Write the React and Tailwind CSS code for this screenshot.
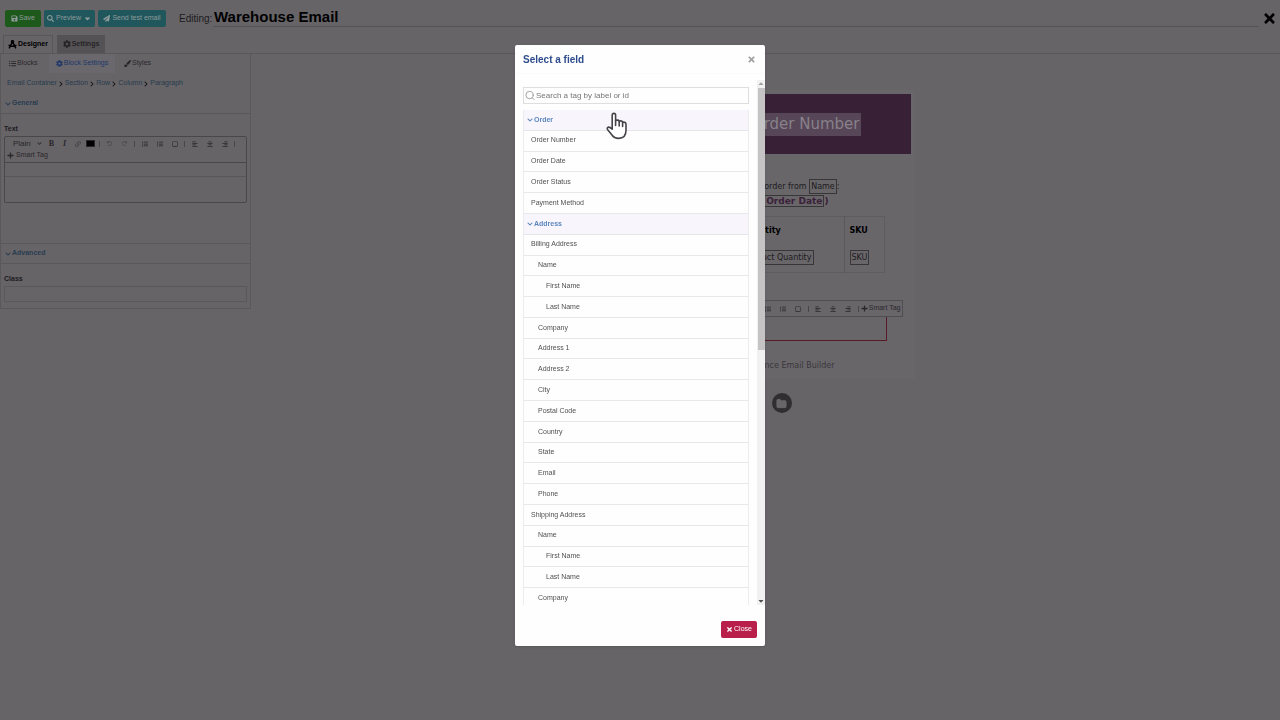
import React from "react";
import {
  FaSave,
  FaSearch,
  FaCaretDown,
  FaPaperPlane,
  FaCog,
  FaListUl,
  FaListOl,
  FaPaintBrush,
  FaPlus,
  FaTimes,
  FaLink,
  FaUndo,
  FaRedo,
  FaAlignLeft,
  FaAlignCenter,
  FaAlignRight,
  FaRegSquare,
  FaChevronDown,
  FaChevronRight,
} from "react-icons/fa";
import { FiSearch, FiFolder } from "react-icons/fi";

const crumbs = ["Email Container", "Section", "Row", "Column", "Paragraph"];

const fields = [
  { label: "Order", group: true },
  { label: "Order Number", level: 0 },
  { label: "Order Date", level: 0 },
  { label: "Order Status", level: 0 },
  { label: "Payment Method", level: 0 },
  { label: "Address", group: true },
  { label: "Billing Address", level: 0 },
  { label: "Name", level: 1 },
  { label: "First Name", level: 2 },
  { label: "Last Name", level: 2 },
  { label: "Company", level: 1 },
  { label: "Address 1", level: 1 },
  { label: "Address 2", level: 1 },
  { label: "City", level: 1 },
  { label: "Postal Code", level: 1 },
  { label: "Country", level: 1 },
  { label: "State", level: 1 },
  { label: "Email", level: 1 },
  { label: "Phone", level: 1 },
  { label: "Shipping Address", level: 0 },
  { label: "Name", level: 1 },
  { label: "First Name", level: 2 },
  { label: "Last Name", level: 2 },
  { label: "Company", level: 1 },
];

const indents = ["pl-[7px]", "pl-[14px]", "pl-[22px]"];

const TopBar = () => (
  <header className="flex items-center h-[36px] pl-[5px] pr-[3px]">
    <div className="flex gap-[3px] text-[7px] text-[#8f9a9b]">
      <button className="flex items-center justify-center gap-px w-[36px] h-[17px] rounded-[2px] bg-[#1e591c]">
        <FaSave /> Save
      </button>
      <button className="flex items-center justify-center gap-[2px] w-[51px] h-[17px] rounded-[2px] bg-[#1f575c]">
        <FaSearch /> Preview <FaCaretDown className="text-[9px]" />
      </button>
      <button className="flex items-center justify-center gap-[2px] w-[68px] h-[17px] rounded-[2px] bg-[#1f575c]">
        <FaPaperPlane /> Send test email
      </button>
    </div>
    <label htmlFor="title" className="ml-[13px] w-[34px] text-[10px] text-[#1c1b1d]">
      Editing:
    </label>
    <input
      id="title"
      defaultValue="Warehouse Email"
      className="flex-1 min-w-0 h-[18px] pl-px border-b border-[#555256] text-[15px] font-bold text-black outline-none"
    />
    <button aria-label="Close editor" className="ml-[3px] text-[15px] text-black">
      <FaTimes />
    </button>
  </header>
);

const MainTabs = () => (
  <nav className="flex items-end gap-[4px] h-[18px] pl-[3px] border-b border-[#5a575b] text-[7px] font-bold">
    <button className="flex items-center justify-center gap-px w-[50px] h-[18px] border border-b-0 border-[#5a575b] text-black">
      <svg viewBox="0 0 16 16" className="w-[9px] h-[9px]" fill="none" stroke="currentColor" strokeWidth="2.6">
        <path d="M2 15 8 3l6 12M1 9q7 4 14 0" />
        <circle cx="8" cy="3" r="1.8" fill="currentColor" />
      </svg>
      Designer
    </button>
    <button className="flex items-center justify-center gap-px w-[48px] h-[18px] bg-[#555256] text-[#252427]">
      <FaCog className="text-[8px]" /> Settings
    </button>
  </nav>
);

const SubTabs = () => (
  <nav className="flex h-[19px] text-[7px] text-[#29272a]">
    <button className="flex items-center gap-px w-[48px] pl-[8px]">
      <FaListUl /> Blocks
    </button>
    <button className="flex items-center justify-center gap-px w-[66px] bg-[#6a676d] text-[#20386a]">
      <FaCog /> Block Settings
    </button>
    <button className="flex items-center gap-px pl-[9px]">
      <FaPaintBrush /> Styles
    </button>
  </nav>
);

const SectionTitle = ({ children }) => (
  <h2 className="flex items-center gap-px h-[20px] pl-[4px] border-b border-[#5b585c] text-[7px] font-bold text-[#293d50]">
    <FaChevronDown className="text-[6px]" />
    {children}
  </h2>
);

const Divider = () => (
  <span className="flex justify-center w-[5px]">
    <span className="w-px h-[6px] bg-[#4a474b]" />
  </span>
);

const Tool = ({ label, children }) => (
  <button aria-label={label} className="flex items-center justify-center w-[15px] text-[6px]">
    {children}
  </button>
);

const ListAndAlignTools = () => (
  <>
    <Tool label="Bulleted list"><FaListUl /></Tool>
    <Tool label="Numbered list"><FaListOl /></Tool>
    <Tool label="Box"><FaRegSquare /></Tool>
    <Divider />
    <Tool label="Align left"><FaAlignLeft /></Tool>
    <Tool label="Align center"><FaAlignCenter /></Tool>
    <Tool label="Align right"><FaAlignRight /></Tool>
    <Divider />
  </>
);

const EditorTools = () => (
  <div className="h-[26px] border-b border-[#4a474b] text-[7px] text-[#29272a]">
    <div className="flex items-center h-[13px]">
      <div className="flex items-center w-[40px] pl-[8px]">
        <select aria-label="Text format" className="appearance-none w-[24px] text-[8px] leading-[12px]">
          <option>Plain</option>
        </select>
        <FaChevronDown className="text-[5px]" />
      </div>
      <button className="w-[13px] font-['Liberation_Serif',serif] text-[8px] font-bold">B</button>
      <button className="w-[13px] font-['Liberation_Serif',serif] text-[8px] font-bold italic">I</button>
      <button aria-label="Link" className="flex justify-center w-[13px] text-[6px] text-[#4c494d]">
        <FaLink />
      </button>
      <button aria-label="Text color" className="flex justify-center w-[13px]">
        <span className="w-[9px] h-[7px] border border-[#29272a] bg-black" />
      </button>
      <Divider />
      <Tool label="Undo"><FaUndo className="text-[5px] text-[#4c494d]" /></Tool>
      <Tool label="Redo"><FaRedo className="text-[5px] text-[#4c494d]" /></Tool>
      <Divider />
      <ListAndAlignTools />
    </div>
    <button className="flex items-center gap-[2px] h-[11px] pl-[2px]">
      <FaPlus /> Smart Tag
    </button>
  </div>
);

const Sidebar = () => (
  <aside className="w-[251px] shrink-0 border-x border-[#5b585c]">
    <SubTabs />
    <div className="flex items-center gap-px h-[21px] pl-[6px] text-[7px] text-[#263b4c]">
      {crumbs.map((crumb, i) => (
        <React.Fragment key={crumb}>
          {i > 0 && <FaChevronRight className="text-[6px] text-[#1c1b1d]" />}
          <a href="#">{crumb}</a>
        </React.Fragment>
      ))}
    </div>
    <SectionTitle>General</SectionTitle>
    <div className="h-[130px] px-[3px] pt-[10px] border-b border-[#5b585c]">
      <h3 className="h-[12px] text-[7px] font-bold leading-[10px] text-[#1c1b1d]">Text</h3>
      <div className="h-[67px] border border-[#4a474b] rounded-[2px]">
        <EditorTools />
        <div className="h-[14px] border-b border-[#59565a]" />
      </div>
    </div>
    <SectionTitle>Advanced</SectionTitle>
    <div className="h-[45px] px-[3px] pt-[10px] border-b border-[#5b585c]">
      <label htmlFor="class" className="block h-[12px] text-[7px] font-bold leading-[10px] text-[#1c1b1d]">
        Class
      </label>
      <input id="class" className="block w-full h-[16px] border border-[#5b585c] outline-none" />
    </div>
  </aside>
);

const Tag = ({ children }) => (
  <span className="px-px py-[2px] border border-[#39363a]">{children}</span>
);

const EmailPreview = () => (
  <main className="flex-1 min-w-0 pt-[36px] font-['DejaVu_Sans',sans-serif] text-[#1c1b1d]">
    <div className="w-[298px] mx-auto p-[4px] pb-0 h-[289px] bg-[#69666a]">
      <h1 className="flex items-center justify-end h-[60px] pr-[50px] bg-[#382036] text-[15px] text-[#88818a]">
        <span className="px-px leading-[23px] bg-[#574657]">Order Number</span>
      </h1>
      <div className="pr-[71px] pt-[26px] text-right text-[8px] leading-[14px]">
        order from <Tag>Name</Tag>:
      </div>
      <div className="pr-[82px] text-right text-[9px] leading-[14px] font-bold text-[#3a2139]">
        (<span className="px-px border border-[#39363a]">Order Date</span>)
      </div>
      <table className="w-[238px] ml-[26px] mt-[8px] border border-[#5f5c60] text-left text-[8px]">
        <thead>
          <tr className="h-[28px] text-black">
            <th className="pl-[94px]">Quantity</th>
            <th className="w-[40px] pl-[5px] border-l border-[#5b585c]">SKU</th>
          </tr>
        </thead>
        <tbody>
          <tr className="h-[28px]">
            <td className="pr-[30px] text-right"><Tag>Product Quantity</Tag></td>
            <td className="pl-[5px] border-l border-[#5b585c]"><Tag>SKU</Tag></td>
          </tr>
        </tbody>
      </table>
      <div className="flex items-center justify-end h-[17px] mt-[27px] mr-[8px] ml-[120px] pr-px border border-[#514e52] font-['Liberation_Sans',Arial,sans-serif] text-[7px] text-[#29272a]">
        <ListAndAlignTools />
        <button className="flex items-center gap-px">
          <FaPlus /> Smart Tag
        </button>
      </div>
      <div className="h-[24px] ml-[26px] mr-[24px] border border-t-0 border-[#571a26]" />
      <p className="mt-[18px] pr-[76px] text-right text-[8px] leading-[14px] text-[#39363a]">
        nce Email Builder
      </p>
    </div>
    <div className="flex justify-center mt-[14px] pl-[32px]">
      <button aria-label="Saved blocks" className="flex items-center justify-center w-[20px] h-[20px] rounded-full bg-[#302e31] text-[#69666a]">
        <FiFolder className="text-[11px]" fill="currentColor" />
      </button>
    </div>
  </main>
);

const HandCursor = () => (
  <svg viewBox="0 0 22 28" className="absolute left-[91px] top-[67px] w-[22px] h-[28px]" fill="#fff" stroke="#454348" strokeWidth="1.6" strokeLinejoin="round" strokeLinecap="round">
    <path d="M6.200 15.500V3.200q0-1.800 1.700-1.800t1.700 1.800V8.500q3-1.100 3.600.7 2.800-.9 3.400 1 3.400-.5 3.400 2.200v5.800q0 8-7.300 8.200-4.600 0-6.700-3.400L1.500 17.400q-.7-1.600.7-2.200 1.500-.5 4 2z" />
    <path fill="none" d="M9.600 8.500v5M13.200 9.500v4.500M16.600 10.500v4" />
  </svg>
);

const FieldModal = () => (
  <div className="fixed inset-0 flex items-start justify-center pt-[45px]">
    <div role="dialog" aria-label="Select a field" className="relative w-[250px] bg-[#fefefe] rounded-[2px] shadow">
      <div className="flex items-center justify-between h-[29px] px-[8px] border-b border-[#fafafa]">
        <h2 className="text-[10px] font-bold text-[#2d4b8c]">Select a field</h2>
        <button aria-label="Close dialog" className="mr-px text-[9px] text-[#a0a0a0]">
          <FaTimes />
        </button>
      </div>
      <div className="flex justify-between h-[531px] pt-[6px] pl-[8px]">
        <div className="w-[226px] pt-[7px] overflow-hidden">
          <div className="flex items-center h-[17px] border border-[#dedede]">
            <FiSearch className="w-[12px] shrink-0 text-[11px] text-[#9a9a9a]" />
            <input
              aria-label="Search a tag by label or id"
              placeholder="Search a tag by label or id"
              className="w-full text-[8px] outline-none placeholder:text-[#757575]"
            />
          </div>
          <ul className="grid auto-rows-fr h-[499px] mt-[6px] border-x border-[#ececec] text-[7px] text-[#505050]">
            {fields.map((field, i) =>
              field.group ? (
                <li key={i} className="flex items-center border-b border-[#e6e6e8] bg-[#f8f6fc]">
                  <button className="flex items-center gap-px pl-[3px] font-bold text-[#5d87bd]">
                    <FaChevronDown className="text-[6px]" /> {field.label}
                  </button>
                </li>
              ) : (
                <li key={i} className={`flex items-center border-b border-[#e8e8e8] ${indents[field.level]}`}>
                  {field.label}
                </li>
              )
            )}
          </ul>
        </div>
        <div className="flex flex-col items-center w-[8px] bg-[#f1f1f1] text-[6px] text-[#505050]">
          <FaCaretDown className="h-[8px] rotate-180 text-[#a0a0a0]" />
          <div className="w-[7px] h-[262px] bg-[#c5c3c4]" />
          <FaCaretDown className="mt-auto h-[8px]" />
        </div>
      </div>
      <div className="flex justify-end h-[41px] pt-[16px] pr-[8px]">
        <button className="flex items-center justify-center gap-px w-[36px] h-[17px] rounded-[2px] bg-[#b81f4b] text-[7px] text-white">
          <FaTimes /> Close
        </button>
      </div>
      <HandCursor />
    </div>
  </div>
);

const App = () => (
  <div className="flex flex-col min-h-screen bg-[#676468] font-['Liberation_Sans',Arial,sans-serif]">
    <TopBar />
    <MainTabs />
    <div className="flex flex-1 items-start">
      <Sidebar />
      <EmailPreview />
    </div>
    <FieldModal />
  </div>
);

export default App;
